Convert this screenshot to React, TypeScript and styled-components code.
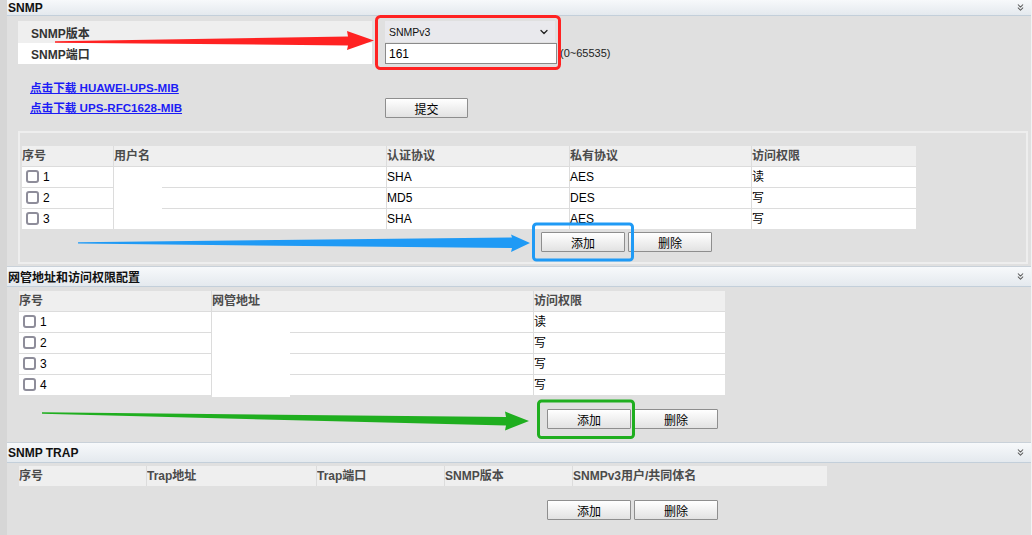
import React from 'react';
import styled, { createGlobalStyle } from 'styled-components';
import { ChevronDown, ChevronsDown } from 'lucide-react';

const FONT = '"Liberation Sans", Arial, "Noto Sans CJK SC", sans-serif';

const users = [
  { id: 1, auth: 'SHA', priv: 'AES', access: '读' },
  { id: 2, auth: 'MD5', priv: 'DES', access: '写' },
  { id: 3, auth: 'SHA', priv: 'AES', access: '写' },
];

const managers = [
  { id: 1, access: '读' },
  { id: 2, access: '写' },
  { id: 3, access: '写' },
  { id: 4, access: '写' },
];

const GlobalStyle = createGlobalStyle`
  html, body {
    margin: 0;
    padding: 0;
    background: #e0e0e0;
  }
  body {
    font-family: ${FONT};
    font-size: 12px;
    color: #000;
  }
`;

const App = () => {
  return (
    <Page>
      <GlobalStyle />
      <LeftRail />
      <Main>
        <SectionHeader $height={15} $first>
          <Title>SNMP</Title>
          <ChevronsDown size={11} strokeWidth={2.2} color="#555" />
        </SectionHeader>
        <SectionBody $bottom={2}>
          <FormTable>
            <FieldLabel $shade $height={22}>SNMP版本</FieldLabel>
            <FieldControl $height={22}>
              <SelectBox>
                <span>SNMPv3</span>
                <ChevronDown size={12} strokeWidth={2.6} color="#222" />
              </SelectBox>
            </FieldControl>
            <FieldLabel $height={21}>SNMP端口</FieldLabel>
            <FieldControl $height={21}>
              <TextInput value="161" readOnly />
              <RangeHint>(0~65535)</RangeHint>
            </FieldControl>
          </FormTable>

          <LinksRow>
            <LinkList>
              <DownloadLink href="#">点击下载 HUAWEI-UPS-MIB</DownloadLink>
              <DownloadLink href="#">点击下载 UPS-RFC1628-MIB</DownloadLink>
            </LinkList>
            <SubmitButton>提交</SubmitButton>
          </LinksRow>

          <Panel>
            <Grid $width={894}>
              <colgroup>
                {[91, 273, 183, 182, 165].map((w, i) => (
                  <Col key={i} $w={w} />
                ))}
              </colgroup>
              <thead>
                <tr>
                  <HeadCell>序号</HeadCell>
                  <HeadCell>用户名</HeadCell>
                  <HeadCell>认证协议</HeadCell>
                  <HeadCell>私有协议</HeadCell>
                  <HeadCell>访问权限</HeadCell>
                </tr>
              </thead>
              <tbody>
                {users.map((u) => (
                  <tr key={u.id}>
                    <Cell>
                      <CheckBox />
                      {u.id}
                    </Cell>
                    <Cell />
                    <Cell>{u.auth}</Cell>
                    <Cell>{u.priv}</Cell>
                    <Cell>{u.access}</Cell>
                  </tr>
                ))}
              </tbody>
            </Grid>
            <ButtonRow $left={519} $top={3}>
              <Button>添加</Button>
              <Button>删除</Button>
            </ButtonRow>
          </Panel>
        </SectionBody>

        <SectionHeader $height={19}>
          <Title>网管地址和访问权限配置</Title>
          <ChevronsDown size={11} strokeWidth={2.2} color="#555" />
        </SectionHeader>
        <SectionBody $bottom={13}>
          <TableWrap>
            <Grid $width={706}>
              <colgroup>
                {[192, 322, 192].map((w, i) => (
                  <Col key={i} $w={w} />
                ))}
              </colgroup>
              <thead>
                <tr>
                  <HeadCell>序号</HeadCell>
                  <HeadCell>网管地址</HeadCell>
                  <HeadCell>访问权限</HeadCell>
                </tr>
              </thead>
              <tbody>
                {managers.map((m) => (
                  <tr key={m.id}>
                    <Cell>
                      <CheckBox />
                      {m.id}
                    </Cell>
                    <Cell />
                    <Cell>{m.access}</Cell>
                  </tr>
                ))}
              </tbody>
            </Grid>
          </TableWrap>
          <ButtonRow $left={540} $top={14}>
            <Button>添加</Button>
            <Button>删除</Button>
          </ButtonRow>
        </SectionBody>

        <SectionHeader $height={19}>
          <Title>SNMP TRAP</Title>
          <ChevronsDown size={11} strokeWidth={2.2} color="#555" />
        </SectionHeader>
        <SectionBody $bottom={0} $top={3}>
          <TableWrap $top={0}>
            <Grid $width={808}>
              <colgroup>
                {[127, 170, 128, 128, 255].map((w, i) => (
                  <Col key={i} $w={w} />
                ))}
              </colgroup>
              <thead>
                <tr>
                  <HeadCell>序号</HeadCell>
                  <HeadCell>Trap地址</HeadCell>
                  <HeadCell>Trap端口</HeadCell>
                  <HeadCell>SNMP版本</HeadCell>
                  <HeadCell>SNMPv3用户/共同体名</HeadCell>
                </tr>
              </thead>
            </Grid>
          </TableWrap>
          <ButtonRow $left={540} $top={14}>
            <Button>添加</Button>
            <Button>删除</Button>
          </ButtonRow>
        </SectionBody>
      </Main>

      <Overlay width={1032} height={535} viewBox="0 0 1032 535">
        {/* redacted cells */}
        <rect x={114} y={186} width={48} height={23} fill="#fff" />
        <rect x={212} y={312} width={78} height={85} fill="#fff" />

        {/* red: SNMP version */}
        <polygon
          points="55,41.3 348,36.5 347,31 374,40.5 347,50 348,45.5 55,42.7"
          fill="#ff2222"
        />
        <rect x={376.5} y={16.5} width={183} height={52} rx={4} fill="none" stroke="#ff2222" strokeWidth={3} />

        {/* blue: user add */}
        <polygon
          points="78,242.2 512,237.5 511,234.5 530,243 511,252 512,248 78,243.6"
          fill="#1f9af5"
        />
        <rect x={533.5} y={224} width={99} height={36} rx={3} fill="none" stroke="#1f9af5" strokeWidth={3} />

        {/* green: manager add */}
        <polygon
          points="42,412.3 506,417 505,411.5 529,421 505,430.5 506,425.5 42,413.8"
          fill="#1fae1f"
        />
        <rect x={538.5} y={401} width={95} height={36.5} rx={3} fill="none" stroke="#1fae1f" strokeWidth={3} />
      </Overlay>
    </Page>
  );
};

const Page = styled.div`
  position: relative;
  display: flex;
  width: 1032px;
  height: 535px;
  overflow: hidden;
`;

const LeftRail = styled.div`
  width: 7px;
  flex-shrink: 0;
  background: #d6d6d6;
`;

const Main = styled.div`
  flex: 1;
  min-width: 0;
  background: #e0e0e0;
  border-right: 1px solid #f2f3f4;
`;

const SectionHeader = styled.div<{ $height: number; $first?: boolean }>`
  height: ${(p) => p.$height}px;
  display: flex;
  align-items: center;
  justify-content: space-between;
  padding: 0 5px 0 1px;
  background: linear-gradient(#f7f9fb, #e4e9ee);
  border-top: ${(p) => (p.$first ? 'none' : '1px solid #c9d1d9')};
  border-bottom: 1px solid #c3cfda;
`;

const Title = styled.span`
  font-weight: bold;
  font-size: 12px;
  color: #111;
`;

const SectionBody = styled.div<{ $bottom: number; $top?: number }>`
  padding-bottom: ${(p) => p.$bottom}px;
  padding-top: ${(p) => p.$top ?? 0}px;
`;

const FormTable = styled.div`
  margin: 5px 0 0 11px;
  display: grid;
  grid-template-columns: 354px auto;
  column-gap: 13px;
`;

const FieldLabel = styled.div<{ $shade?: boolean; $height: number }>`
  height: ${(p) => p.$height}px;
  display: flex;
  align-items: center;
  padding-left: 13px;
  background: ${(p) => (p.$shade ? '#efefef' : '#fff')};
  font-weight: bold;
  color: #333;
`;

const FieldControl = styled.div<{ $height: number }>`
  height: ${(p) => p.$height}px;
  display: flex;
  align-items: flex-start;
`;

const SelectBox = styled.div`
  width: 170px;
  height: 21px;
  box-sizing: border-box;
  display: flex;
  align-items: center;
  justify-content: space-between;
  padding: 0 5px 0 4px;
  background: #e9e9ed;
  font-size: 10.5px;
  color: #111;
`;

const TextInput = styled.input`
  width: 172px;
  height: 21px;
  box-sizing: border-box;
  margin: 0;
  padding: 0 3px;
  border: 1px solid #8a8a8a;
  background: #fff;
  font-family: ${FONT};
  font-size: 12px;
  color: #000;
  outline: none;
`;

const RangeHint = styled.span`
  margin-left: 3px;
  line-height: 21px;
  font-size: 11px;
  color: #222;
`;

const LinksRow = styled.div`
  display: flex;
  margin-top: 14px;
  padding-left: 23px;
`;

const LinkList = styled.div`
  width: 355px;
  display: flex;
  flex-direction: column;
`;

const DownloadLink = styled.a`
  display: block;
  line-height: 20px;
  font-weight: bold;
  font-size: 11.6px;
  color: #1c1cf5;
  text-decoration: underline;
`;

const Button = styled.button`
  width: 84px;
  height: 20px;
  box-sizing: border-box;
  margin: 0;
  padding: 0;
  border: 1px solid #8e8e8e;
  border-radius: 1px;
  background: linear-gradient(#ffffff, #e2e2e2);
  font-family: ${FONT};
  font-size: 12px;
  color: #000;
`;

const SubmitButton = styled(Button)`
  width: 83px;
  margin-top: 20px;
`;

const Panel = styled.div`
  width: 1004px;
  margin: 13px 0 0 11px;
  padding: 13px 0 10px 2px;
  border: 2px solid #eeeeee;
`;

const TableWrap = styled.div<{ $top?: number }>`
  margin: ${(p) => p.$top ?? 4}px 0 0 12px;
`;

const Grid = styled.table<{ $width: number }>`
  width: ${(p) => p.$width}px;
  table-layout: fixed;
  border-collapse: separate;
  border-spacing: 0;
  font-size: 12px;
`;

const Col = styled.col<{ $w: number }>`
  width: ${(p) => p.$w}px;
`;

const HeadCell = styled.th`
  padding: 0;
  line-height: 20px;
  text-align: left;
  font-weight: bold;
  color: #4b4b4b;
  background: #efefef;
  white-space: nowrap;
  overflow: hidden;

  & + & {
    border-left: 1px solid #dcdcdc;
  }
`;

const Cell = styled.td`
  padding: 0;
  line-height: 20px;
  background: #fff;
  border-top: 1px solid #dcdcdc;
  white-space: nowrap;
  color: #000;

  & + & {
    border-left: 1px solid #dcdcdc;
  }
`;

const CheckBox = styled.input.attrs({ type: 'checkbox' })`
  appearance: none;
  width: 13px;
  height: 13px;
  box-sizing: border-box;
  margin: 0 4px 0 4px;
  border: 2px solid #8e8d9a;
  border-radius: 3px;
  background: #fff;
  vertical-align: middle;
  position: relative;
  top: -1px;
`;

const ButtonRow = styled.div<{ $left: number; $top: number }>`
  display: flex;
  gap: 3px;
  margin-top: ${(p) => p.$top}px;
  padding-left: ${(p) => p.$left}px;
`;

const Overlay = styled.svg`
  position: absolute;
  top: 0;
  left: 0;
  pointer-events: none;
`;

export default App;
